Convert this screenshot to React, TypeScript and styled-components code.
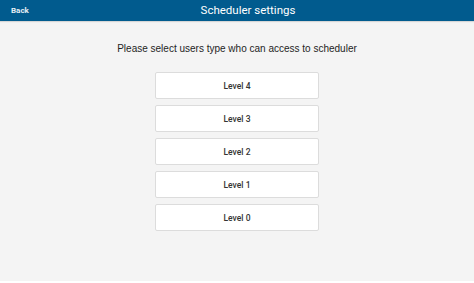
import * as React from 'react'
import styled, { createGlobalStyle } from 'styled-components'

const GlobalStyle = createGlobalStyle`
    html, body {
        margin: 0;
        padding: 0;
        background: #ffffff;
    }
    body {
        font-family: Roboto, "Liberation Sans", Arial, sans-serif;
    }
`

const Page = styled.div`
    width: 474px;
    height: 281px;
    background-color: #f4f4f4;
    display: flex;
    flex-direction: column;
`

const Header = styled.div`
    height: 21px;
    background-color: #015b8e;
    display: grid;
    grid-template-columns: 60px 1fr 38px;
    align-items: center;
    box-shadow: 0 1px 1px rgba(0, 0, 0, 0.12);
`

const BackButton = styled.button`
    justify-self: start;
    background: none;
    border: none;
    padding: 0 0 0 11px;
    color: #e6eef4;
    font-family: inherit;
    font-size: 8px;
    font-weight: 700;
    cursor: pointer;
`

const Title = styled.div`
    text-align: center;
    color: #ffffff;
    font-size: 11.5px;
    line-height: 21px;
`

const Content = styled.div`
    display: flex;
    flex-direction: column;
    align-items: center;
    padding-top: 21px;
`

const Prompt = styled.div`
    color: #1e1e1e;
    font-family: "Liberation Sans", Arial, sans-serif;
    font-size: 10px;
    line-height: 14px;
    margin-bottom: 16px;
`

const LevelList = styled.div`
    display: flex;
    flex-direction: column;
    gap: 6px;
`

const LevelButton = styled.button`
    width: 164px;
    height: 27px;
    background: #ffffff;
    border: 1px solid #dcdcdc;
    border-radius: 2px;
    color: #333333;
    font-family: inherit;
    font-size: 8.5px;
    font-weight: 500;
    cursor: pointer;
`

const levels = [4, 3, 2, 1, 0]

export default function App() {
    return <>
        <GlobalStyle />
        <Page>
            <Header>
                <BackButton>Back</BackButton>
                <Title>Scheduler settings</Title>
                <span />
            </Header>
            <Content>
                <Prompt>Please select users type who can access to scheduler</Prompt>
                <LevelList>
                    {levels.map(l => <LevelButton key={l}>Level {l}</LevelButton>)}
                </LevelList>
            </Content>
        </Page>
    </>
}
